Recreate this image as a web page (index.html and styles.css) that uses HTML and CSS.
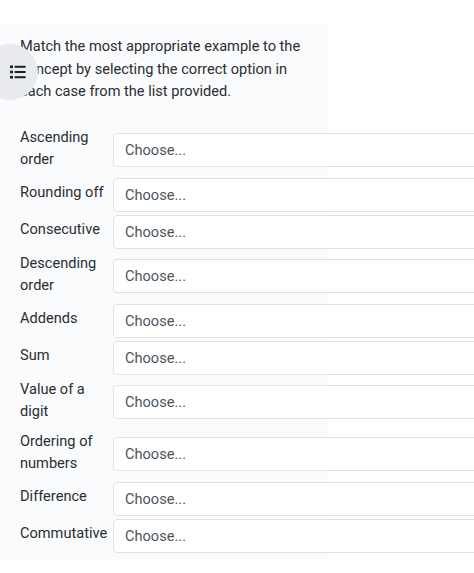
FILE: index.html
```html
<!DOCTYPE html>
<html lang="en">
<head>
<meta charset="utf-8">
<title>Match question</title>
<link rel="stylesheet" href="styles.css">
</head>
<body>
<button class="drawer-toggle" type="button" aria-label="Open course index">
  <svg width="16" height="14" viewBox="0 0 16 14" aria-hidden="true">
    <rect x="0" y="0.5" width="3" height="2.6" fill="#1d2125"/>
    <rect x="0" y="5.7" width="3" height="2.6" fill="#1d2125"/>
    <rect x="0" y="10.9" width="3" height="2.6" fill="#1d2125"/>
    <rect x="4.6" y="0.8" width="11" height="2" fill="#1d2125"/>
    <rect x="4.6" y="6" width="11" height="2" fill="#1d2125"/>
    <rect x="4.6" y="11.2" width="11" height="2" fill="#1d2125"/>
  </svg>
</button>
<div class="panel">
  <p class="prompt">Match the most appropriate example to the concept by selecting the correct option in each case from the list provided.</p>
  <div class="rows">
    <div class="row"><div class="label">Ascending order</div><div class="control">Choose...</div></div>
    <div class="row"><div class="label">Rounding off</div><div class="control">Choose...</div></div>
    <div class="row"><div class="label">Consecutive</div><div class="control">Choose...</div></div>
    <div class="row"><div class="label">Descending order</div><div class="control">Choose...</div></div>
    <div class="row"><div class="label">Addends</div><div class="control">Choose...</div></div>
    <div class="row"><div class="label">Sum</div><div class="control">Choose...</div></div>
    <div class="row"><div class="label">Value of a digit</div><div class="control">Choose...</div></div>
    <div class="row"><div class="label">Ordering of numbers</div><div class="control">Choose...</div></div>
    <div class="row"><div class="label">Difference</div><div class="control">Choose...</div></div>
    <div class="row"><div class="label">Commutative</div><div class="control">Choose...</div></div>
  </div>
</div>
</body>
</html>
```

FILE: styles.css
```css
html, body {
  margin: 0;
  padding: 0;
  background: #ffffff;
  overflow: hidden;
}
body {
  font-family: Roboto, "Liberation Sans", Arial, sans-serif;
  font-size: 14.6px;
  color: #2a2e32;
  width: 474px;
  height: 573px;
  position: relative;
}
.panel {
  margin-top: 24px;
  width: 328px;
  background: #fafbfc;
  padding: 11px 0 8px 20px;
  box-sizing: border-box;
}
.prompt {
  margin: 0;
  line-height: 22.5px;
  width: 300px;
}
.rows {
  margin-top: 23px;
  display: flex;
  flex-direction: column;
  gap: 3px;
}
.row {
  display: flex;
  align-items: center;
  gap: 3px;
}
.label {
  flex: 0 0 90px;
  line-height: 22px;
  padding-bottom: 5px;
}
.control {
  flex: 0 0 auto;
  width: 380px;
  height: 34px;
  box-sizing: border-box;
  border: 1px solid #dee2e6;
  border-radius: 4px;
  background: #ffffff;
  padding-left: 11px;
  display: flex;
  align-items: center;
  color: #4f555b;
}
.drawer-toggle {
  position: absolute;
  left: -18px;
  top: 44px;
  width: 56px;
  height: 56px;
  border-radius: 50%;
  border: none;
  background: #e8eaed;
  padding: 0 0 0 28px;
  display: flex;
  align-items: center;
  justify-content: flex-start;
}
```
